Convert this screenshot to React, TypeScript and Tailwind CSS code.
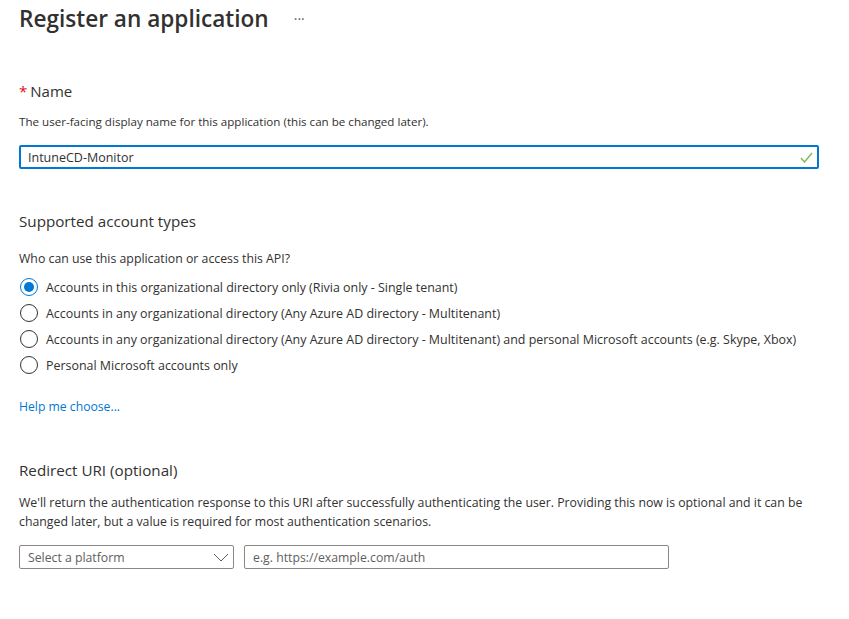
const accountTypes = [
  'Accounts in this organizational directory only (Rivia only - Single tenant)',
  'Accounts in any organizational directory (Any Azure AD directory - Multitenant)',
  'Accounts in any organizational directory (Any Azure AD directory - Multitenant) and personal Microsoft accounts (e.g. Skype, Xbox)',
  'Personal Microsoft accounts only',
]

export default function App() {
  return (
    <div className="h-[619px] w-[849px] overflow-hidden bg-white pl-[19px] pr-[30px] font-['Open_Sans',sans-serif] text-[12.3px] text-[#323130]">
      <div className="flex h-[38px] items-center">
        <h1 className="text-[22.6px] leading-[38px] font-semibold text-[#323130]">Register an application</h1>
        <span className="ml-[25px] text-[14px] leading-none text-[#605e5c]">···</span>
      </div>

      <div className="mt-[42px] flex h-[22px] items-center text-[15px]">
        <span className="mr-[3px] text-[#e00b1c]">*</span>
        Name
      </div>
      <p className="mt-[11px] text-[11.6px] leading-[18px]">The user-facing display name for this application (this can be changed later).</p>
      <div className="mt-[14px] flex h-[24px] items-center justify-between rounded-[2px] border-2 border-[#0078d4] pr-[4px] pl-[7px] text-[12.5px]">
        <span className="pt-[3px]">IntuneCD-Monitor</span>
        <svg viewBox="0 0 13 11" className="h-[11px] w-[13px] text-[#7fba4a]" fill="none" stroke="currentColor" strokeWidth="1.4">
          <path d="M1 6l3.5 4L12 1" />
        </svg>
      </div>

      <h2 className="mt-[41px] text-[15.2px] leading-[22px]">Supported account types</h2>
      <p className="mt-[18px] leading-[18px]">Who can use this application or access this API?</p>
      <div className="mt-[10px] flex flex-col gap-[8px]">
        {accountTypes.map((label, i) => (
          <label key={label} className="flex h-[18px] items-center">
            <span
              className={
                i === 0
                  ? 'mr-[8px] ml-[1px] flex h-[18px] w-[18px] items-center justify-center rounded-full border border-[#0078d4]'
                  : 'mr-[8px] ml-[1px] h-[18px] w-[18px] rounded-full border border-[#323130]'
              }
            >
              {i === 0 && <span className="h-[10px] w-[10px] rounded-full bg-[#0078d4]" />}
            </span>
            <span className="pt-[2px] text-[12.45px] whitespace-nowrap">{label}</span>
          </label>
        ))}
      </div>
      <a className="mt-[24px] block text-[12.2px] leading-[18px] text-[#0078d4]">Help me choose...</a>

      <h2 className="mt-[43px] text-[15.2px] leading-[22px]">Redirect URI (optional)</h2>
      <p className="mt-[12px] leading-[19px]">
        We'll return the authentication response to this URI after successfully authenticating the user. Providing this now is optional and it can be changed later, but a value is required for most authentication scenarios.
      </p>
      <div className="mt-[14px] flex gap-[10px] text-[12.25px]">
        <div className="flex h-[24px] w-[215px] items-center justify-between rounded-[2px] border border-[#8a8886] pr-[4px] pl-[8px] text-[#605e5c]">
          <span className="pt-[3px]">Select a platform</span>
          <svg viewBox="0 0 16 9" className="h-[9px] w-[16px] text-[#605e5c]" fill="none" stroke="currentColor" strokeWidth="1">
            <path d="M1 1l7 7 7-7" />
          </svg>
        </div>
        <div className="flex h-[24px] w-[425px] items-center rounded-[2px] border border-[#8a8886] px-[8px] pt-[2px] text-[#605e5c]">
          e.g. https://example.com/auth
        </div>
      </div>
    </div>
  )
}
